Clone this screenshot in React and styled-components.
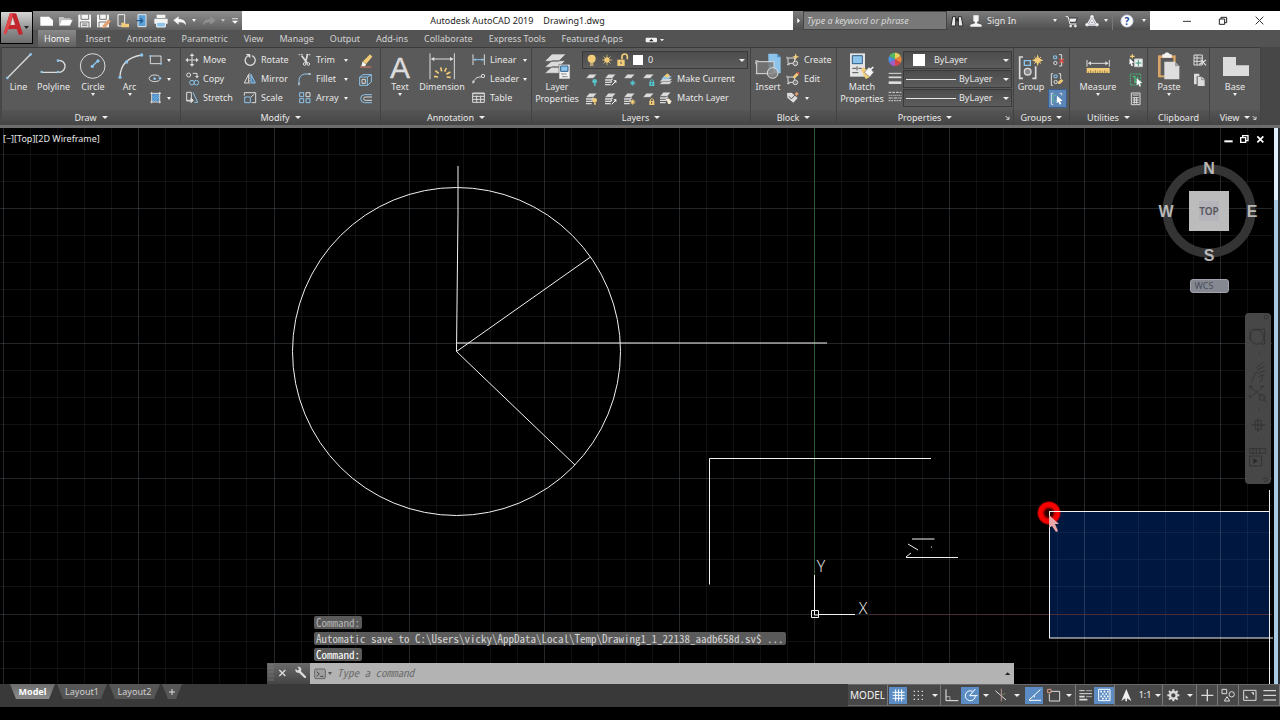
import React from 'react';
import styled, { createGlobalStyle, css } from 'styled-components';

const GlobalStyle = createGlobalStyle`
  body {
    margin: 0;
    background: #000000;
  }

  button, input, select {
    font: inherit;
    color: inherit;
    margin: 0;
    padding: 0;
    border: 0;
    background: none;
    outline: none;
  }
`;

const LIGHT = '#dcdcdc';
const BLUE = '#8cc4ec';
const YELLOW = '#f2cc78';
const TEAL = '#56c4cc';

const Page = styled.div`
  display: flex;
  flex-direction: column;
  min-height: 100vh;
  box-sizing: border-box;
  padding: 11px 0 13px 0;
  background: #000000;
  color: #e8e8e8;
  font-family: 'Noto Sans', 'Open Sans', sans-serif;
  font-size: 9px;
  line-height: 12px;
`;

/* ---------- title bar ---------- */

const Header = styled.header`
  display: grid;
  grid-template-columns: 33px 1fr;
  background: #535353;
`;

const AppButton = styled.button`
  display: flex;
  align-items: center;
  height: 33px;
  box-sizing: border-box;
  border: 1px solid #000000;
  background: linear-gradient(#d6d6d6, #8c8c8c 60%, #6e6e6e);
`;

const HeaderMain = styled.div`
  display: flex;
  flex-direction: column;
  min-width: 0;
`;

const TitleBar = styled.div`
  display: flex;
  height: 19px;
  background: #ffffff;
`;

const QuickAccess = styled.div`
  display: flex;
  align-items: center;
  padding: 0 1px 0 4px;
  background: linear-gradient(#8e8e8e, #606060);
`;

const TitleText = styled.div`
  flex: 1;
  display: flex;
  align-items: center;
  justify-content: center;
  gap: 10px;
  color: #1c1c1c;
`;

const InfoCenter = styled.div`
  display: flex;
  align-items: center;
  background: linear-gradient(#7c7c7c, #4e4e4e);
`;

const SearchInput = styled.input`
  width: 144px;
  height: 19px;
  box-sizing: border-box;
  padding-left: 3px;
  border: 1px solid #444444;
  background: #787878;
  font-style: italic;

  &::placeholder {
    color: #d8d8d8;
    opacity: 1;
  }
`;

const SignIn = styled.button`
  width: 65px;
  padding-left: 2px;
  text-align: left;
`;

const BarButton = styled.button`
  display: flex;
  align-items: center;
  justify-content: center;
  width: ${(p) => p.$w || 19}px;
  height: 19px;
  ${(p) => p.$sep && css`border-left: 1px solid #777777;`}
`;

const WindowButtons = styled.div`
  display: flex;
  padding: 0 3px 0 19px;
`;

const TabRow = styled.nav`
  display: flex;
  height: 17px;
  padding-left: 3px;
`;

const Tab = styled.button`
  margin: 0 2px;
  padding: 0 6px;
  color: #d2d2d2;
  ${(p) => p.$active && css`
    color: #f4f4f4;
    background: linear-gradient(#8a8a8a, #606060);
  `}
`;

/* ---------- ribbon ---------- */

const RibbonBar = styled.div`
  display: flex;
  padding-left: 2px;
  border-bottom: 3px solid #6c6c6c;
  background: #474747;
`;

const PanelBox = styled.section`
  display: flex;
  flex-direction: column;
  border-right: 1px solid #424242;
`;

const PanelBody = styled.div`
  display: flex;
  height: 63px;
  box-sizing: border-box;
  padding: 3px 0 0 ${(p) => p.$pad || 0}px;
  border-top: 1px solid #3a3a3a;
  background: #5a5a5a;
`;

const PanelFoot = styled.div`
  display: grid;
  grid-template-columns: 1fr auto 1fr;
  align-items: center;
  height: 15px;
  background: linear-gradient(#555555, #454545);
`;

const FootButton = styled.button`
  display: flex;
  align-items: center;
  gap: 5px;
`;

const Launcher = styled.button`
  display: flex;
  justify-self: end;
  padding-right: 3px;
`;

const LargeButton = styled.button`
  display: flex;
  flex-direction: column;
  align-items: center;
  width: ${(p) => p.$w}px;
  white-space: nowrap;
`;

const LargeIcon = styled.span`
  display: flex;
  align-items: center;
  justify-content: center;
  height: 30px;
`;

const Column = styled.div`
  display: flex;
  flex-direction: column;
  width: ${(p) => p.$w}px;
  margin-left: ${(p) => p.$gap || 0}px;
`;

const Row = styled.div`
  display: flex;
  align-items: center;
  height: 19px;
`;

const SmallButton = styled.button`
  display: flex;
  align-items: center;
  gap: 3px;
  height: 19px;
  box-sizing: border-box;
  padding-bottom: 2px;
  white-space: nowrap;
`;

const DropButton = styled.button`
  display: flex;
  align-items: center;
  justify-content: center;
  width: 12px;
  height: 19px;
  margin-left: ${(p) => (p.$auto ? 'auto' : '0')};
`;

const IconButton = styled.button`
  display: flex;
  align-items: center;
  justify-content: center;
  width: ${(p) => p.$w || 19}px;
  height: 19px;
  ${(p) => p.$active && css`
    background: #5c86b8;
    box-shadow: inset 0 0 0 1px #39608f;
  `}
`;

const Combo = styled.label`
  display: flex;
  align-items: center;
  gap: 3px;
  height: 18px;
  width: ${(p) => p.$w}px;
  box-sizing: border-box;
  margin-bottom: 1px;
  padding: 0 2px 0 ${(p) => p.$pad || 3}px;
  border: 1px solid #3a3a3a;
  background: linear-gradient(#4c4c4c, #5c5c5c);

  select {
    flex: 1;
    min-width: 0;
    appearance: none;
  }
`;

const Swatch = styled.span`
  width: ${(p) => p.$size}px;
  height: ${(p) => p.$size}px;
  margin-right: ${(p) => p.$gap}px;
  background: #ffffff;
`;

const LineSample = styled.span`
  width: 50px;
  height: 1px;
  background: #e6e6e6;
`;

/* ---------- drawing area ---------- */

const Workspace = styled.main`
  display: flex;
  flex: 1;
`;

const Canvas = styled.div`
  position: relative;
  flex: 1;
  min-height: 400px;
  overflow: hidden;
  background: #000000;
`;

const Drawing = styled.svg`
  position: absolute;
  inset: 0;
  width: 100%;
  height: 100%;
`;

const EdgeStrip = styled.div`
  width: 4px;
  border-right: 2px solid #2b3036;
  background: linear-gradient(#e2f0fa 72px, #a9cbe4 72px);
`;

const ViewLabel = styled.div`
  position: absolute;
  top: 5px;
  left: 3px;
`;

const ViewControls = styled.div`
  position: absolute;
  top: 4px;
  right: 6px;
  display: flex;

  button {
    display: flex;
    justify-content: center;
    width: 16px;
  }
`;

const ViewCube = styled.div`
  position: absolute;
  top: 29px;
  right: 13px;
  display: flex;
  flex-direction: column;
  align-items: center;
  gap: 14px;
`;

const WcsButton = styled.button`
  width: 39px;
  height: 14px;
  padding-left: 4px;
  border-radius: 3px;
  border: 1px solid #a0a3ac;
  background: #858891;
  color: #4a4d57;
  line-height: 10px;
  text-align: left;
`;

const NavBar = styled.div`
  position: absolute;
  top: 185px;
  right: 3px;
  display: flex;
  padding: 1px 0;
  border-radius: 4px;
  background: #474747;
`;

const CommandArea = styled.div`
  position: absolute;
  left: 267px;
  right: 260px;
  bottom: 0;
`;

const History = styled.div`
  display: flex;
  flex-direction: column;
  align-items: flex-start;
  gap: 3px;
  padding: 0 0 2px 47px;
  font-family: 'Noto Sans Mono CJK JP', 'Liberation Mono', monospace;
  font-size: 11px;
  line-height: 12px;
`;

const HistoryLine = styled.div`
  padding: 0 2px 1px 2px;
  border-radius: 2px;
  background: #5a5a5a;
  color: ${(p) => p.$color};
`;

const CommandBar = styled.div`
  display: flex;
  height: 21px;
  background: linear-gradient(#6a6a6a, #444444);
`;

const CommandField = styled.label`
  display: flex;
  flex: 1;
  align-items: center;
  gap: 2px;
  padding: 0 2px 0 4px;
  background: #b3b3b3;

  input {
    flex: 1;
    margin-left: 3px;
    padding-bottom: 3px;
    font: italic 11px 'Noto Sans Mono CJK JP', 'Liberation Mono', monospace;
    color: #333333;
  }

  input::placeholder {
    color: #6c6c6c;
    opacity: 1;
  }
`;

/* ---------- status bar ---------- */

const StatusBar = styled.footer`
  display: flex;
  justify-content: space-between;
  align-items: flex-start;
  height: 23px;
  background: #393939;
`;

const LayoutTabs = styled.div`
  display: flex;
  gap: 2px;
  padding-left: 10px;
`;

const LayoutTab = styled.button`
  display: flex;
  align-items: center;
  justify-content: center;
  width: ${(p) => p.$w}px;
  height: 15px;
  clip-path: polygon(0 0, 100% 0, calc(100% - 6px) 100%, 6px 100%);
  background: #565656;
  color: #d0d0d0;
  ${(p) => p.$active && css`
    background: linear-gradient(#6c6c6c, #8c8c8c);
    color: #ffffff;
    font-weight: bold;
  `}
`;

const StatusTools = styled.div`
  display: flex;
  height: 22px;
  box-sizing: border-box;
  border-top: 1px solid #6a6a6a;
  border-bottom: 1px solid #6a6a6a;
  background: #484848;
`;

const StatusGroup = styled.div`
  display: flex;
  align-items: center;
  padding-left: ${(p) => p.$pad || 0}px;
  border-right: 1px solid #7a7a7a;
`;

const StatusButton = styled.button`
  display: flex;
  align-items: center;
  justify-content: center;
  width: ${(p) => p.$w}px;
  height: 17px;
  font-size: ${(p) => (p.$big ? 10 : 9)}px;
  color: #f4f4f4;
  ${(p) => p.$active && css`background: #5b8dc4;`}
`;

/* ---------- icons, drawn on a grid three times their size ---------- */

const IconSvg = styled.svg`
  flex: none;
  overflow: visible;
`;

const Icon = ({ v, children }) => {
  const [, , w, h] = v.split(' ').map(Number);
  return (
    <IconSvg width={w / 3} height={h / 3} viewBox={v} fill="none" stroke={LIGHT} strokeWidth="3" aria-hidden="true">
      {children}
    </IconSvg>
  );
};

const Caret = ({ color = '#f0f0f0', size = 5 }) => (
  <svg width={size} height="3" viewBox="0 0 6 4" preserveAspectRatio="none" aria-hidden="true">
    <path d="M0 0h6L3 4z" fill={color} />
  </svg>
);

const Dots = ({ at, r = 4 }) => at.map(([x, y]) => (
  <circle key={`${x}-${y}`} cx={x} cy={y} r={r} fill={BLUE} stroke="none" />
));

const icons = {
  line: <Icon v="13 153 84 84"><path d="M20 231L90 160" strokeWidth="4" /><Dots at={[[20, 231], [90, 160]]} /></Icon>,
  polyline: <Icon v="119 153 84 84"><path d="M124 214h52a18 18 0 0 0 0-36" strokeWidth="4" /><Dots at={[[124, 213], [173, 213], [173, 179]]} /></Icon>,
  circle: <Icon v="237 153 84 84"><circle cx="278" cy="195" r="37" /><path d="M277 196l16-16" stroke={BLUE} strokeWidth="4" /><Dots r={5} at={[[277, 196], [294, 180]]} /></Icon>,
  arc: <Icon v="346 153 84 84"><path d="M358 229Q359 172 424 162" strokeWidth="4" /><Dots r={5} at={[[358, 229], [378, 183], [423, 162]]} /></Icon>,
  rect: <Icon v="443 156 48 48"><path d="M453 168h32v23h-32z" /><Dots at={[[453, 168], [485, 191]]} r={3} /></Icon>,
  ellipse: <Icon v="443 214 48 48"><path d="M480 230a17 10 0 1 0 1 11" /><Dots at={[[466, 237], [482, 236]]} r={4} /></Icon>,
  hatch: <Icon v="443 272 48 48"><path d="M458 283h22v24h-22z" fill="#4f8fca" stroke="none" /><path d="M453 282h32M453 308h32M457 278v34M481 278v34" /><path d="M461 304l18-18M461 296l10-10M468 304l11-11" stroke={BLUE} strokeWidth="2" /></Icon>,

  move: <Icon v="553 156 48 48"><path d="M577 164v32M561 180h32" /><path d="M577 160l7 8h-14zM577 200l7-8h-14zM557 180l8-7v14zM597 180l-8-7v14z" fill={LIGHT} stroke="none" /></Icon>,
  copy: <Icon v="553 214 48 48"><circle cx="567" cy="226" r="6" /><path d="M579 221h13v10" /><path d="M592 236l-6-7h12z" fill={LIGHT} stroke="none" /><circle cx="577" cy="249" r="7" stroke={BLUE} /><circle cx="590" cy="249" r="7" stroke={BLUE} /></Icon>,
  stretch: <Icon v="553 272 48 48"><path d="M561 279h14v26h-14z" /><path d="M574 296l7 7-7 7zM562 303h14" fill={LIGHT} /><path d="M580 279l14 30h-10" stroke={BLUE} /></Icon>,
  rotate: <Icon v="727 156 48 48"><path d="M757 167a15 15 0 1 1-13 1" strokeWidth="4" /><path d="M738 162h14v13z" fill={LIGHT} stroke="none" /></Icon>,
  mirror: <Icon v="727 214 48 48"><path d="M747 224v26h-13z" /><path d="M754 224v26h13z" stroke={BLUE} fill="#4c7da8" /><path d="M750 220v36" strokeDasharray="4 3" strokeWidth="2" /></Icon>,
  scale: <Icon v="727 272 48 48"><path d="M734 289v-9h34v30h-12" /><path d="M735 293h17v17h-17z" stroke={BLUE} /><path d="M754 293l10-9" /></Icon>,
  trim: <Icon v="893 156 48 48"><path d="M898 164h14M921 164h14" strokeDasharray="5 2" /><path d="M907 167l17 23M925 162l-7 26" strokeWidth="5" /><circle cx="916" cy="192" r="4" /><circle cx="927" cy="192" r="4" /></Icon>,
  fillet: <Icon v="893 214 48 48"><path d="M899 255v-12a19 19 0 0 1 19-20h16" stroke={BLUE} /><path d="M899 257v-8M926 223h9" /></Icon>,
  array: <Icon v="893 272 48 48"><path d="M901 280h12v12h-12zM901 298h12v12h-12zM920 298h12v12h-12z" stroke={BLUE} /><path d="M920 280h12v12h-12z" /></Icon>,
  erase: <Icon v="1074 156 48 48"><path d="M1110 160l7 7-18 21-12-5z" fill={YELLOW} stroke="none" /><path d="M1087 183l12 6-4 7h-11z" fill="#f4f4f4" stroke="none" /><path d="M1080 198h34" stroke="#d87a62" /></Icon>,
  explode: <Icon v="1074 214 48 48"><path d="M1088 222h26v22M1079 229h23v25h-23zM1080 229l8-7M1102 229l12-7M1102 254l12-10" stroke={BLUE} /><path d="M1086 236h10v12h-10z" /></Icon>,
  offset: <Icon v="1074 272 48 48"><path d="M1116 283h-22a12 12 0 0 0 0 24h22" stroke={BLUE} /><path d="M1116 290h-20a5 5 0 0 0 0 10h20" /></Icon>,

  text: <Icon v="18 153 84 84"><text x="60" y="230" textAnchor="middle" fontFamily="Liberation Sans, sans-serif" fontSize="90" fill={LIGHT} stroke={LIGHT} strokeWidth="1">A</text></Icon>,
  dimension: (
    <Icon v="143 153 84 84">
      <path d="M149 157v78M222 157v78M156 174h60" />
      <path d="M151 174l11-6v12zM220 174l-11-6v12z" fill={LIGHT} stroke="none" />
      <path d="M161 226l12 2M165 209l10 8M181 199l3 12M198 201l-5 11M210 213l-12 7M199 228l12 1" stroke={YELLOW} strokeWidth="5" />
    </Icon>
  ),
  linear: <Icon v="270 156 48 48"><path d="M276 163v32M310 163v32" /><path d="M278 179h30" stroke={BLUE} /><path d="M277 179l7-4v8zM309 179l-7-4v8z" fill={BLUE} stroke="none" /></Icon>,
  leader: <Icon v="270 214 48 48"><path d="M277 249c2-10 10-18 24-17" /><path d="M274 252l1-10 7 5z" fill={LIGHT} stroke="none" /><circle cx="306" cy="229" r="5" /></Icon>,
  table: <Icon v="270 272 48 48"><path d="M275 281h35v28h-35zM275 283h35M275 291h35M275 300h35M287 289v20M299 289v20" /></Icon>,

  layerProps: (
    <Icon v="489 153 84 84">
      <path d="M494 217l22-20h40l-20 20zM494 199l22-20h40l-20 20zM494 181l22-22h42l-22 22z" fill={LIGHT} stroke="#5a5a5a" strokeWidth="2" />
      <path d="M537 190h33v44h-33z" fill="#f2f2f2" stroke="#666666" strokeWidth="2" />
      <path d="M542 195h22v16h-22z" fill={BLUE} stroke="#2f5f88" />
      <path d="M543 219h17M546 227h17" stroke="#555555" strokeWidth="2" />
    </Icon>
  ),

  insert: (
    <Icon v="39 153 84 84">
      <path d="M82 158h26l11 11v48H82z" fill={BLUE} stroke="none" />
      <path d="M108 158v11h11z" fill="#4a91cc" stroke="none" />
      <path d="M47 182h52v36H47z" fill="#777777" fillOpacity="0.8" />
      <circle cx="95" cy="216" r="16" fill="#888888" fillOpacity="0.8" />
      <path d="M44 190v-11h8M44 218h6" strokeWidth="2" />
    </Icon>
  ),
  createBlock: <Icon v="135 156 48 48"><path d="M144 174h20v16h-20zM141 194h8M141 170v6" /><circle cx="166" cy="190" r="7" fill="#777777" /><path d="M167 160l3 8 8 2-8 3-3 8-3-8-7-3 7-2z" fill={YELLOW} stroke="none" /></Icon>,
  editBlock: <Icon v="135 214 48 48"><path d="M144 232h20v16h-20zM141 252h8M141 228v6" /><circle cx="166" cy="248" r="7" fill="#777777" /><path d="M158 236l3-8 9-9 6 6-10 10z" fill={YELLOW} stroke="none" /><path d="M170 219l4-3 5 5-3 4z" fill="#e05a48" stroke="none" /></Icon>,
  attribute: <Icon v="135 272 48 48"><path d="M141 281l14-1 18 16-13 14-18-15z" fill={LIGHT} stroke="none" /><path d="M147 291l7 8 15-16" stroke="#555555" /><path d="M164 284l6-6 6 5-7 7z" fill="#e8a070" stroke="none" /></Icon>,

  matchProps: (
    <Icon v="325 153 84 84">
      <path d="M331 157h45v70h-45z" fill="#e4e4e4" stroke="none" />
      <path d="M338 164h30v24h-30z" fill={BLUE} stroke="#2f5f88" />
      <path d="M338 202h12M356 202h10M338 215h18M352 196v12" stroke="#555555" />
      <path d="M364 206l8-8 22 24-7 8-9 4z" fill={YELLOW} stroke="none" />
      <path d="M374 214l14-16 14 16-12 14z" fill="#f4f4f4" stroke="#777777" strokeWidth="2" />
      <path d="M392 206l9-8" stroke="#f4f4f4" strokeWidth="5" />
    </Icon>
  ),
  wheel: (
    <Icon v="439 156 48 48">
      <g stroke="none">
        <path d="M463 178V158a20 20 0 0 1 17 10z" fill="#e8d05a" />
        <path d="M463 178l17-10a20 20 0 0 1 0 20z" fill="#e8853c" />
        <path d="M463 178l17 10a20 20 0 0 1-17 10z" fill="#d84848" />
        <path d="M463 178v20a20 20 0 0 1-17-10z" fill="#a45cc8" />
        <path d="M463 178l-17 10a20 20 0 0 1 0-20z" fill="#4f8fe0" />
        <path d="M463 178l-17-10a20 20 0 0 1 17-10z" fill="#56b860" />
      </g>
    </Icon>
  ),
  weights: <Icon v="439 214 48 48"><path d="M444 221h38" /><path d="M444 233h38" strokeWidth="5" /><path d="M444 249h38" strokeWidth="8" /></Icon>,
  linetypes: <Icon v="439 272 48 48"><path d="M444 279h38" strokeDasharray="8 3" /><path d="M444 288h38" strokeDasharray="3 3" /><path d="M444 296h38" strokeDasharray="9 2 3 2" /><path d="M444 304h38" strokeDasharray="5 3" /></Icon>,

  group: (
    <Icon v="18 153 84 84">
      <path d="M36 168H26v64h10M64 232h10v-36" strokeWidth="5" />
      <path d="M40 179h18v14H40z" stroke={BLUE} strokeWidth="4" />
      <circle cx="50" cy="212" r="10" fill="#8a8a8a" strokeWidth="4" />
      <path d="M80 160l4 12 13 6-13 6-4 12-4-12-13-6 13-6z" fill={YELLOW} stroke="none" />
      <path d="M70 168l20 20M90 168l-20 20" stroke={YELLOW} />
    </Icon>
  ),
  ungroup: <Icon v="121 156 48 48"><path d="M132 165h9v8h-9z" stroke={BLUE} /><circle cx="137" cy="186" r="5" /><path d="M148 161h8v34h-8" /><path d="M149 173l13 13M162 173l-13 13" stroke="#e05048" strokeWidth="4" /></Icon>,
  groupEdit: <Icon v="121 214 48 48"><path d="M130 219h-5v35h5M147 219h6v16" /><path d="M133 223h9v8h-9z" stroke={BLUE} /><circle cx="138" cy="244" r="5" /><path d="M144 250l3-8 8-7 6 5-9 9z" fill={YELLOW} stroke="none" /></Icon>,
  groupSelect: <Icon v="121 272 48 48"><path d="M131 279h-6v33h6M150 279h6v6" /><path d="M130 285h10M130 285v18h8" stroke="#57c98d" strokeDasharray="4 2" /><path d="M142 286l17 15-8 1 4 8-5 3-4-9-5 5z" fill="#ffffff" stroke="none" /></Icon>,

  measure: (
    <Icon v="223 153 84 84">
      <path d="M232 177v20M299 177v20M238 187h56" />
      <path d="M234 187l10-6v12zM297 187l-10-6v12z" fill={LIGHT} stroke="none" />
      <path d="M231 201h69v15h-69z" fill={YELLOW} stroke="none" />
      <path d="M236 216v-5M243 216v-8M250 216v-5M257 216v-8M264 216v-5M271 216v-8M278 216v-5M285 216v-8M292 216v-5" stroke="#6a5a30" strokeWidth="2" />
    </Icon>
  ),
  quickSelect: <Icon v="352 156 48 48"><path d="M365 160v12M358 166h14" stroke={YELLOW} strokeWidth="4" /><path d="M357 172l13 13-6 1 3 8-4 2-4-9-3 4z" fill="#ffffff" stroke="none" /><path d="M372 174h23v23h-23z" fill="#e8f4f0" stroke="#cccccc" /><path d="M375 186h17M383 177v18" stroke="#46907c" /></Icon>,
  selectAll: <Icon v="352 214 48 48"><path d="M359 220h31v33h-31z" stroke="#46c07a" strokeDasharray="5 3" /><path d="M366 228h7v17h8v-17" stroke="#46c07a" strokeWidth="4" /><path d="M378 233l17 14-8 1 4 8-4 2-4-8-5 4z" fill="#ffffff" stroke="none" /></Icon>,
  calculator: <Icon v="352 272 48 48"><path d="M362 278h26v35h-26zM366 284h18M366 292h18M366 299h18M366 306h18M371 291v19M378 291v19" /></Icon>,

  paste: (
    <Icon v="436 153 84 84">
      <path d="M445 163h53v66h-53z" fill="#d9a567" stroke="none" />
      <path d="M453 171h38v52h-38z" fill="#5a5a5a" stroke="none" />
      <path d="M458 160h6c2-7 14-7 16 0h6v10h-28z" fill="#f2f2f2" stroke="none" />
      <path d="M464 182h32l13 14v39h-45z" fill="#dedede" stroke="none" />
      <path d="M496 182v14h13z" fill="#9c9c9c" stroke="none" />
    </Icon>
  ),
  cut: <Icon v="544 156 48 48"><path d="M550 162h25v30h-25zM550 171h25M550 181h25M559 162v30" /><path d="M566 190l20-13M570 176l16 17" strokeWidth="4" /></Icon>,
  copyClip: <Icon v="544 214 48 48"><path d="M550 219h16v8h-8v24h-8z" fill={LIGHT} stroke="none" /><path d="M561 228h13l8 8v20h-21z" fill={LIGHT} stroke="none" /><path d="M573 228v9h9" stroke="#666666" strokeWidth="2" /></Icon>,
  base: <Icon v="633 153 84 84"><path d="M639 168h39v25h39v32h-78z" fill={LIGHT} stroke="none" /></Icon>,
};

const accents = {
  bulb: (c) => <><circle cx="32" cy="28" r="7" fill={c} stroke="none" /><path d="M30 35h5v6h-5z" fill={c} stroke="none" /></>,
  arrow: () => <><path d="M26 40l12-12" stroke="#ffffff" /><path d="M40 25v9l-9-9z" fill="#ffffff" stroke="none" /></>,
  sun: (c) => <><circle cx="32" cy="33" r="5" fill={c} stroke="none" /><path d="M32 24v18M23 33h18M26 27l12 12M38 27l-12 12" stroke={c} strokeWidth="2" /></>,
  lock: (c) => <><path d="M25 30h15v12H25z" fill={c} stroke="none" /><path d="M28 31v-5a5 5 0 0 1 9 0v5" stroke={c} /><path d="M32 33v5" stroke="#444444" /></>,
  hand: (c) => <path d="M24 28l7-3 10 9-5 8h-5z" fill={c} stroke="none" />,
};

const LayerIcon = ({ accent, color, full }) => (
  <Icon v="0 0 48 48">
    <path d="M6 19L16 7h22L28 19z" fill={LIGHT} stroke="#5a5a5a" strokeWidth="1" />
    {full && <path d="M6 24h18l5-4M6 31h17l4-4M6 38h17" strokeWidth="4" />}
    {accents[accent](color)}
  </Icon>
);

const MakeCurrentIcon = () => (
  <Icon v="0 0 48 48">
    <path d="M4 40l10-9h29l-9 9zM4 32l10-9h29l-9 9z" fill={LIGHT} stroke="#5a5a5a" strokeWidth="1" />
    <path d="M10 24l8-9h23l-8 9z" fill={BLUE} stroke="none" />
    <path d="M18 16l10-9 8 7-7 6z" fill={YELLOW} stroke="none" />
  </Icon>
);

/* ---------- ribbon parts ---------- */

const Panel = ({ title, pad, menu = true, launcher, children }) => (
  <PanelBox aria-label={title}>
    <PanelBody $pad={pad}>{children}</PanelBody>
    <PanelFoot>
      <span />
      <FootButton>{title}{menu && <Caret size={6} />}</FootButton>
      {launcher ? (
        <Launcher aria-label={`${title} settings`}>
          <Icon v="0 0 15 15"><path d="M2 3l9 9M12 5v8H4" /></Icon>
        </Launcher>
      ) : <span />}
    </PanelFoot>
  </PanelBox>
);

const Large = ({ icon, label, second, w, drop }) => (
  <LargeButton $w={w}>
    <LargeIcon>{icons[icon]}</LargeIcon>
    <span>{label}</span>
    {second && <span>{second}</span>}
    {drop && <Caret size={4} />}
  </LargeButton>
);

const Small = ({ icon, label, drop }) => (
  <Row>
    <SmallButton aria-label={label || icon}>{icons[icon]}{label}</SmallButton>
    {drop && <DropButton $auto={Boolean(label)} aria-label={`${label || icon} options`}><Caret size={4} /></DropButton>}
  </Row>
);

const ByLayer = ({ label, swatch }) => (
  <Combo $w={109} $pad={swatch ? 9 : 2}>
    {swatch ? <Swatch $size={12} $gap={6} /> : <LineSample />}
    <select aria-label={label} defaultValue="ByLayer"><option>ByLayer</option></select>
    <Caret size={6} />
  </Combo>
);

const Ribbon = () => (
  <RibbonBar>
    <Panel title="Draw">
      <Large icon="line" label="Line" w={33} />
      <Large icon="polyline" label="Polyline" w={37} />
      <Large icon="circle" label="Circle" w={42} drop />
      <Large icon="arc" label="Arc" w={31} drop />
      <Column $w={33} $gap={2}>
        <Small icon="rect" drop />
        <Small icon="ellipse" drop />
        <Small icon="hatch" drop />
      </Column>
    </Panel>
    <Panel title="Modify" pad={3}>
      <Column $w={58}>
        <Small icon="move" label="Move" />
        <Small icon="copy" label="Copy" />
        <Small icon="stretch" label="Stretch" />
      </Column>
      <Column $w={55}>
        <Small icon="rotate" label="Rotate" />
        <Small icon="mirror" label="Mirror" />
        <Small icon="scale" label="Scale" />
      </Column>
      <Column $w={55}>
        <Small icon="trim" label="Trim" drop />
        <Small icon="fillet" label="Fillet" drop />
        <Small icon="array" label="Array" drop />
      </Column>
      <Column $w={28}>
        <IconButton $w={28} aria-label="Erase">{icons.erase}</IconButton>
        <IconButton $w={28} aria-label="Explode">{icons.explode}</IconButton>
        <IconButton $w={28} aria-label="Offset">{icons.offset}</IconButton>
      </Column>
    </Panel>
    <Panel title="Annotation">
      <Large icon="text" label="Text" w={38} drop />
      <Large icon="dimension" label="Dimension" w={46} />
      <Column $w={60} $gap={6}>
        <Small icon="linear" label="Linear" drop />
        <Small icon="leader" label="Leader" drop />
        <Small icon="table" label="Table" />
      </Column>
    </Panel>
    <Panel title="Layers">
      <Large icon="layerProps" label="Layer" second="Properties" w={50} />
      <Column $w={168}>
        <Combo $w={166}>
          <Icon v="0 0 39 48"><circle cx="17" cy="20" r="12" fill={YELLOW} stroke="none" /><path d="M12 31h10v10H12z" fill={YELLOW} stroke="none" /><path d="M12 36h10" stroke="#777777" /></Icon>
          <Icon v="0 0 36 48"><circle cx="15" cy="24" r="8" fill={YELLOW} stroke="none" /><path d="M15 8v32M0 24h31M4 13l22 22M26 13L4 35" stroke={YELLOW} strokeWidth="2" /></Icon>
          <Icon v="0 0 39 48"><path d="M1 23h22v19H1z" fill={YELLOW} stroke="none" /><path d="M15 22v-8a8 8 0 0 1 16 0v8" stroke={YELLOW} strokeWidth="5" /><path d="M12 29v7" stroke="#555555" /></Icon>
          <Swatch $size={10} $gap={2} />
          <select aria-label="Layer" defaultValue="0"><option>0</option></select>
          <Caret size={6} />
        </Combo>
        <Row>
          <IconButton aria-label="Off"><LayerIcon accent="bulb" color={TEAL} /></IconButton>
          <IconButton aria-label="Isolate"><LayerIcon accent="arrow" full /></IconButton>
          <IconButton aria-label="Freeze"><LayerIcon accent="sun" color={TEAL} /></IconButton>
          <IconButton aria-label="Lock"><LayerIcon accent="lock" color={TEAL} /></IconButton>
          <SmallButton><MakeCurrentIcon />Make Current</SmallButton>
        </Row>
        <Row>
          <IconButton aria-label="Turn all layers on"><LayerIcon accent="bulb" color={YELLOW} full /></IconButton>
          <IconButton aria-label="Unisolate"><LayerIcon accent="arrow" full /></IconButton>
          <IconButton aria-label="Thaw all layers"><LayerIcon accent="sun" color={YELLOW} full /></IconButton>
          <IconButton aria-label="Unlock"><LayerIcon accent="lock" color={YELLOW} /></IconButton>
          <SmallButton><LayerIcon accent="hand" color="#f4ead0" full />Match Layer</SmallButton>
        </Row>
      </Column>
    </Panel>
    <Panel title="Block">
      <Large icon="insert" label="Insert" w={34} />
      <Column $w={51}>
        <Small icon="createBlock" label="Create" />
        <Small icon="editBlock" label="Edit" />
        <Small icon="attribute" drop />
      </Column>
    </Panel>
    <Panel title="Properties" launcher>
      <Large icon="matchProps" label="Match" second="Properties" w={50} />
      <Column $w={16}>
        <Small icon="wheel" />
        <Small icon="weights" />
        <Small icon="linetypes" />
      </Column>
      <Column $w={110}>
        <ByLayer label="Object color" swatch />
        <ByLayer label="Lineweight" />
        <ByLayer label="Linetype" />
      </Column>
    </Panel>
    <Panel title="Groups">
      <Large icon="group" label="Group" w={34} />
      <Column $w={21}>
        <IconButton aria-label="Ungroup">{icons.ungroup}</IconButton>
        <IconButton aria-label="Group edit">{icons.groupEdit}</IconButton>
        <IconButton aria-label="Group selection" $active>{icons.groupSelect}</IconButton>
      </Column>
    </Panel>
    <Panel title="Utilities">
      <Large icon="measure" label="Measure" w={56} drop />
      <Column $w={21}>
        <IconButton aria-label="Quick select">{icons.quickSelect}</IconButton>
        <IconButton aria-label="Select all">{icons.selectAll}</IconButton>
        <IconButton aria-label="Quick calculator">{icons.calculator}</IconButton>
      </Column>
    </Panel>
    <Panel title="Clipboard" menu={false}>
      <Large icon="paste" label="Paste" w={42} drop />
      <Column $w={19}>
        <IconButton aria-label="Cut">{icons.cut}</IconButton>
        <IconButton aria-label="Copy clip">{icons.copyClip}</IconButton>
      </Column>
    </Panel>
    <Panel title="View" launcher>
      <Large icon="base" label="Base" w={50} drop />
    </Panel>
  </RibbonBar>
);

/* ---------- title bar parts ---------- */

const tabs = ['Home', 'Insert', 'Annotate', 'Parametric', 'View', 'Manage', 'Output', 'Add-ins', 'Collaborate', 'Express Tools', 'Featured Apps'];

const quickIcons = [
  ['New', <path d="M7 14h26l12 11v16H7z" fill="#ffffff" stroke="none" />],
  ['Open', <><path d="M6 40V15h13l4 4h18v6" fill="#c8c8c8" stroke="none" /><path d="M6 41l8-18h33l-8 18z" fill="#ffffff" stroke="#888888" strokeWidth="1" /></>],
  ['Save', <><path d="M7 8h38v38H7z" fill="#f4f4f4" stroke="none" /><path d="M15 8v14h23V8M13 46V30h26v16M18 36h16M18 41h16" stroke="#777777" /></>],
  ['Save as', <><path d="M6 8h36v38H6z" fill="#f4f4f4" stroke="none" /><path d="M14 8v14h20V8M12 46V30h22" stroke="#777777" /><path d="M24 40l16-18 8 6-16 18-10 3z" fill="#e0a070" stroke="none" /></>],
  ['Open from mobile', <><path d="M12 8h20v34H12z" fill="#777777" stroke="#f0f0f0" /><path d="M22 32h8l3 3h12v11H22z" fill={YELLOW} stroke="none" /></>],
  ['Save to mobile', <><path d="M15 8h24v36H15z" fill="#5aa0d8" stroke="#e8e8e8" /><path d="M10 26h16M22 19l7 7-7 7" stroke="#245c90" strokeWidth="4" /></>],
  ['Plot', <><path d="M14 8h26v10H14zM7 20h40v15H7z" fill="#f4f4f4" stroke="none" /><path d="M14 31h26v14H14z" fill={BLUE} stroke="#f4f4f4" /></>],
];

const TitleSection = () => (
  <Header>
    <AppButton aria-label="Application menu">
      <Icon v="3 36 69 93">
        <path d="M11 101L28 44q1-4 5-4h12q4 0 5 4l19 58-12 3-7-18-26 1-6 15zM30 75l16-1-8-24z" fill="#c3262c" fillRule="evenodd" stroke="none" />
        <path d="M28 44q1-4 5-4h6l-9 35-14 28-5-2z" fill="#e2484a" stroke="none" />
        <path d="M33 75l5-18 6 17z" fill="#f2dcdc" stroke="none" />
      </Icon>
      <Caret size={5} color="#222222" />
    </AppButton>
    <HeaderMain>
      <TitleBar>
        <QuickAccess>
          {quickIcons.map(([name, shape]) => (
            <BarButton key={name} aria-label={name}><Icon v="0 0 54 54">{shape}</Icon></BarButton>
          ))}
          <BarButton aria-label="Undo"><Icon v="0 0 48 54"><path d="M4 25l16-12v8c14 0 22 6 22 19-5-8-10-10-22-9v7z" fill="#f4f4f4" stroke="none" /></Icon></BarButton>
          <BarButton $w={10} aria-label="Undo list"><Caret size={4} /></BarButton>
          <BarButton aria-label="Redo"><Icon v="0 0 48 54"><path d="M44 25L28 13v8C14 21 6 27 6 40c5-8 10-10 22-9v7z" fill="#909090" stroke="none" /></Icon></BarButton>
          <BarButton $w={10} aria-label="Redo list"><Caret size={4} color="#c0c0c0" /></BarButton>
          <BarButton $w={13} aria-label="Customize quick access"><Icon v="0 0 24 24"><path d="M3 5h18" /><path d="M3 11h18l-9 9z" fill="#ffffff" stroke="none" /></Icon></BarButton>
        </QuickAccess>
        <TitleText><span>Autodesk AutoCAD 2019</span><span>Drawing1.dwg</span></TitleText>
        <InfoCenter>
          <BarButton $w={10} aria-label="Collapse search"><Icon v="0 0 15 24"><path d="M4 3l8 8-8 8z" fill="#ffffff" stroke="none" /></Icon></BarButton>
          <SearchInput aria-label="Search" placeholder="Type a keyword or phrase" />
          <BarButton $w={20} aria-label="Find">
            <Icon v="0 0 48 48"><path d="M6 39l5-28h9v28zM28 39V11h9l5 28z" fill="#e8e8e8" stroke="#2c2c2c" /><path d="M19 16h10v9H19z" fill="#2c2c2c" stroke="none" /></Icon>
          </BarButton>
          <BarButton $w={18} aria-label="Account">
            <Icon v="0 0 48 48"><path d="M16 7h16v16l-5 5v3l14 4v6H7v-6l14-4v-3l-5-5z" fill="#f4f4f4" stroke="none" /></Icon>
          </BarButton>
          <SignIn>Sign In</SignIn>
          <BarButton $w={10} aria-label="Account options"><Caret size={4} /></BarButton>
          <BarButton $w={24} aria-label="App store">
            <Icon v="0 0 48 48"><path d="M14 15h26l-5 13H18z" fill="#f0f0f0" stroke="#30343c" /><path d="M5 11h7l6 22h19" stroke="#f0f0f0" /><circle cx="20" cy="39" r="3" fill="#ffffff" /><circle cx="34" cy="39" r="3" fill="#ffffff" /></Icon>
          </BarButton>
          <BarButton $w={16} aria-label="Autodesk App Store">
            <Icon v="0 0 48 48"><path d="M24 10L9 36h30zM24 20l-6 11h12z" stroke="#ececf4" strokeWidth="4" /><circle cx="24" cy="11" r="4" fill="#ffffff" /><circle cx="9" cy="35" r="4" fill="#ffffff" /><circle cx="39" cy="35" r="4" fill="#ffffff" /></Icon>
          </BarButton>
          <BarButton $w={12} aria-label="Store options"><Caret size={4} /></BarButton>
          <BarButton $w={26} $sep aria-label="Help">
            <Icon v="0 0 42 42"><circle cx="24" cy="21" r="18" fill="#ffffff" stroke="#d0d8ec" /><text x="24" y="32" textAnchor="middle" fontSize="30" fontWeight="bold" fill="#24459a" stroke="none">?</text></Icon>
          </BarButton>
          <BarButton $w={12} aria-label="Help options"><Caret size={4} /></BarButton>
        </InfoCenter>
        <WindowButtons>
          <BarButton $w={36} aria-label="Minimize"><Icon v="0 0 24 24"><path d="M0 13h24" stroke="#333333" /></Icon></BarButton>
          <BarButton $w={36} aria-label="Restore"><Icon v="0 0 30 30"><path d="M4 9h16v16H4zM9 9V4h17v16h-6" stroke="#222222" /></Icon></BarButton>
          <BarButton $w={36} aria-label="Close"><Icon v="0 0 27 27"><path d="M2 2l23 23M25 2L2 25" stroke="#333333" /></Icon></BarButton>
        </WindowButtons>
      </TitleBar>
      <TabRow>
        {tabs.map((tab, i) => <Tab key={tab} $active={i === 0}>{tab}</Tab>)}
        <BarButton $w={48} aria-label="Minimize ribbon">
          <Icon v="0 0 60 24"><rect x="2" y="5" width="34" height="14" rx="3" fill="#f0f0f0" stroke="none" /><path d="M12 16l7-7 7 7z" fill="#222222" stroke="none" /><path d="M45 9h12l-6 7z" fill="#f0f0f0" stroke="none" /></Icon>
        </BarButton>
      </TabRow>
    </HeaderMain>
  </Header>
);

/* ---------- model space ---------- */

const STEP = 27.03;
const ORIGIN_X = 814.6;
const ORIGIN_Y = 614;
const TOP = 128;

const gridLines = (origin, from, to) => {
  const lines = [];
  for (let k = Math.ceil((from - origin) / STEP); origin + k * STEP < to; k += 1) {
    lines.push({ at: Math.floor(origin + k * STEP) + 0.5, major: k % 5 === 0 });
  }
  return lines;
};

const ModelSpace = () => (
  <Drawing fill="none" stroke="#f2f2f2">
    <defs>
      <radialGradient id="click">
        <stop offset="0" stopColor="#180000" />
        <stop offset="0.3" stopColor="#380000" />
        <stop offset="0.55" stopColor="#f00000" />
        <stop offset="0.85" stopColor="#ff0000" />
        <stop offset="1" stopColor="#c00000" stopOpacity="0.3" />
      </radialGradient>
    </defs>
    <g transform={`translate(0 ${-TOP})`}>
      <path d="M1049 512h221v126h-221z" fill="#00183f" stroke="none" />
      {gridLines(ORIGIN_X, 0, 1272).map(({ at, major }) => (
        <path key={`x${at}`} d={`M${at} ${TOP}V684`} stroke="#a0b0c0" strokeOpacity={major ? 0.22 : 0.09} />
      ))}
      {gridLines(ORIGIN_Y, TOP, 684).map(({ at, major }) => (
        <path key={`y${at}`} d={`M0 ${at}H1272`} stroke="#a0b0c0" strokeOpacity={major ? 0.22 : 0.09} />
      ))}
      <path d="M814.5 128V575" stroke="#2c5a2c" />
      <path d="M870 614.5H1272" stroke="#4a2c34" />
      <circle cx="456.5" cy="351.5" r="164" />
      <path d="M458 166V213L457 305L456.5 351.5L590.5 257M456.5 351.5L575 465M457 343H827" />
      <path d="M709.5 584.5V458.5H931" />
      <path d="M912 539H934.5M906 557.5H958M908 544l10 6M906 557l5-4M931 547h1" />
      <path d="M1049.5 638V511.5H1269M1049 638H1273M1269.5 490V684" />
      <path d="M814.5 575V610M819 614.5H855M811.5 610.5h7v7h-7zM814.5 611v4h4" />
      <g fontSize="16" fontFamily="Open Sans, sans-serif" fontWeight="300" fill="#f2f2f2" stroke="none" textAnchor="middle">
        <text x="821" y="572">Y</text>
        <text x="863" y="614">X</text>
      </g>
      <circle cx="1049" cy="513" r="12" fill="url(#click)" stroke="none" />
      <path d="M1049 511.5h12M1049.5 512v8" />
      <path d="M1049 515v13l3-2 4 6 2-1-3-7h4z" fill="#e8a8a8" stroke="none" />
    </g>
  </Drawing>
);

const ViewTools = () => (
  <>
    <ViewLabel>[−][Top][2D Wireframe]</ViewLabel>
    <ViewControls>
      <button aria-label="Minimize drawing"><Icon v="0 0 27 48"><path d="M1 28h25" strokeWidth="6" stroke="#ffffff" /></Icon></button>
      <button aria-label="Restore drawing"><Icon v="0 0 27 48"><path d="M2 17h15v14H2zM8 16v-5h16v15h-6" stroke="#ffffff" strokeWidth="4" /></Icon></button>
      <button aria-label="Close drawing"><Icon v="0 0 27 48"><path d="M4 13l18 18M22 13L4 31" stroke="#ffffff" strokeWidth="5" /></Icon></button>
    </ViewControls>
    <ViewCube>
      <svg width="104" height="108" viewBox="0 0 104 108" role="img" aria-label="View cube">
        <circle cx="52" cy="54" r="42" fill="none" stroke="#343434" strokeWidth="9" />
        <g fontFamily="Liberation Sans, sans-serif" fontWeight="bold" fontSize="16" fill="#b8b8b8" textAnchor="middle">
          <text x="52" y="17">N</text>
          <text x="52" y="104">S</text>
          <text x="9" y="60">W</text>
          <text x="95" y="60">E</text>
        </g>
        <path d="M32 34h40v40H32z" fill="#bcbcbc" />
        <path d="M42 44h20v20H42z" fill="#b4b4ba" />
        <text x="52" y="58" fontSize="10" fontWeight="600" fill="#55555a" textAnchor="middle">TOP</text>
      </svg>
      <WcsButton>WCS</WcsButton>
    </ViewCube>
    <NavBar>
      <Icon v="374 568 78 507">
        <g stroke="#2c2c2c" strokeWidth="2">
          <circle cx="437" cy="577" r="6" />
          <path d="M393 614h40v44h-12M389 616v30M395 622a20 22 0 1 0 32 26 20 22 0 0 0-32-26zM414 686h4M392 775c12-20 6-30 20-34M408 730l20-16M410 736l24-12M412 746l22-8M414 756l18-6M424 752c6 8 0 20-8 20M388 785l42 34M430 785l-42 34" />
          <path d="M388 785h10M388 785v9M430 785h-10M388 819v-9" />
          <circle cx="425" cy="818" r="9" />
          <path d="M431 825l8 9M413 853h4M413 880v42M392 901h44M405 888h18v26h-18zM413 945h4M388 972h48v14h-48zM398 972v14M408 972v14M418 972v14M388 994h36v30h-36z" />
          <path d="M400 1002l12 7-12 7z" fill="#2c2c2c" />
          <circle cx="436" cy="1065" r="6" />
        </g>
      </Icon>
    </NavBar>
  </>
);

const Command = () => (
  <CommandArea>
    <History>
      <HistoryLine $color="#b4b4b4">Command:</HistoryLine>
      <HistoryLine $color="#d4d4d4">{'Automatic save to C:\\Users\\vicky\\AppData\\Local\\Temp\\Drawing1_1_22138_aadb658d.sv$ ...'}</HistoryLine>
      <HistoryLine $color="#ffffff">Command:</HistoryLine>
    </History>
    <CommandBar>
      <BarButton $w={7} aria-label="Move command line"><Icon v="0 0 21 57"><path d="M6 4v50M12 4v50M18 4v50" strokeDasharray="2 2" stroke="#a0a0a0" strokeWidth="2" /></Icon></BarButton>
      <BarButton $w={17} aria-label="Close command line"><Icon v="0 0 27 27"><path d="M4 6l18 18M22 6L4 24" strokeWidth="4" /></Icon></BarButton>
      <BarButton $w={19} aria-label="Customize">
        <Icon v="0 0 39 39"><path d="M16 16l17 17" strokeWidth="7" strokeLinecap="round" /><path d="M5 8l6 6 5-5-6-6c7-2 13 3 12 9s-7 10-12 8S3 13 5 8z" fill={LIGHT} stroke="none" /></Icon>
      </BarButton>
      <CommandField>
        <Icon v="0 0 36 36"><rect x="2" y="3" width="32" height="29" rx="4" fill="#a0a0a0" stroke="#666666" /><path d="M8 11l8 7-8 7M19 25h9" stroke="#444444" /></Icon>
        <Caret size={4} color="#555555" />
        <input aria-label="Command" placeholder="Type a command" />
        <Icon v="0 0 24 24"><path d="M3 15l8-8 8 8z" fill="#222222" stroke="none" /></Icon>
      </CommandField>
    </CommandBar>
  </CommandArea>
);

const StatusDrop = ({ w }) => <StatusButton $w={w} aria-label="Options"><Caret size={6} /></StatusButton>;

const Status = () => (
  <StatusBar>
    <LayoutTabs>
      <LayoutTab $w={45} $active>Model</LayoutTab>
      <LayoutTab $w={50}>Layout1</LayoutTab>
      <LayoutTab $w={51}>Layout2</LayoutTab>
      <LayoutTab $w={20} aria-label="New layout"><Icon v="0 0 18 18"><path d="M9 0v18M0 9h18" /></Icon></LayoutTab>
    </LayoutTabs>
    <StatusTools>
      <StatusGroup><StatusButton $w={39} $big>MODEL</StatusButton></StatusGroup>
      <StatusGroup $pad={1}>
        <StatusButton $w={18} $active aria-label="Grid"><Icon v="154 84 39 45"><path d="M165 88v36M174 88v36M183 88v36M156 97h36M156 106h36M156 115h36" stroke="#ffffff" /></Icon></StatusButton>
        <StatusButton $w={22} aria-label="Snap"><Icon v="214 84 39 45"><path d="M219 94h32M219 106h32M219 118h32" strokeDasharray="4 8" strokeWidth="4" /></Icon></StatusButton>
        <StatusDrop w={11} />
      </StatusGroup>
      <StatusGroup>
        <StatusButton $w={20} aria-label="Ortho"><Icon v="311 84 45 45"><path d="M317 88v34h37" stroke="#f0f0f0" /><path d="M317 110h12v12" strokeWidth="2" /></Icon></StatusButton>
        <StatusButton $w={18} $active aria-label="Polar"><Icon v="368 84 45 45"><path d="M397 94a15 15 0 1 0 8 13M388 107l17-20M388 107h24" stroke="#ffffff" /></Icon></StatusButton>
        <StatusDrop w={14} />
        <StatusButton $w={16} aria-label="Isodraft"><Icon v="461 84 48 45"><path d="M468 92l32 28" /><path d="M486 86v38" stroke="#b89090" /><path d="M488 105l10-5" strokeWidth="2" stroke="#87b070" /></Icon></StatusButton>
        <StatusDrop w={16} />
        <StatusButton $w={18} $active aria-label="Tracking"><Icon v="558 84 45 45"><path d="M564 120l34-31M564 121h36" stroke="#ffffff" /><path d="M580 106v6" stroke="#ffffff" /></Icon></StatusButton>
        <StatusButton $w={20} aria-label="Object snap"><Icon v="615 84 45 45"><path d="M630 94h26v29h-31v-22" /><path d="M620 88h10v10h-10z" stroke="#e0a088" /></Icon></StatusButton>
        <StatusDrop w={12} />
      </StatusGroup>
      <StatusGroup>
        <StatusButton $w={18} aria-label="Lineweight"><Icon v="711 84 45 45"><path d="M715 92h16M715 101h38" /><path d="M715 110h16M715 119h24" strokeWidth="5" /><path d="M735 92h18M735 110h18" strokeWidth="2" /></Icon></StatusButton>
        <StatusButton $w={20} $active aria-label="Transparency"><Icon v="774 84 45 45"><path d="M779 88h34v34h-34z" stroke="#ffffff" /><path d="M784 95h26M789 102h22M784 109h26M789 116h22" strokeDasharray="5 5" strokeWidth="5" stroke="#ffffff" /></Icon></StatusButton>
      </StatusGroup>
      <StatusGroup>
        <StatusButton $w={22} aria-label="Annotation visibility"><Icon v="837 84 45 45"><path d="M859 87l15 36-13-8v9h-5v-9l-12 8z" fill="#f0f0f0" stroke="none" /></Icon></StatusButton>
        <StatusButton $w={16}>1:1</StatusButton>
        <StatusDrop w={9} />
      </StatusGroup>
      <StatusGroup>
        <StatusButton $w={21} aria-label="Workspace"><Icon v="980 84 45 45"><circle cx="1002" cy="106" r="10" strokeWidth="7" /><path d="M1002 88v9M1002 115v9M984 106h9M1011 106h9M989 93l7 7M1008 112l7 7M1015 93l-7 7M996 112l-7 7" strokeWidth="6" /></Icon></StatusButton>
        <StatusDrop w={12} />
      </StatusGroup>
      <StatusGroup><StatusButton $w={20} aria-label="Annotation monitor"><Icon v="1077 84 45 45"><path d="M1099 88v36M1081 106h36" strokeWidth="4" /></Icon></StatusButton></StatusGroup>
      <StatusGroup><StatusButton $w={20} aria-label="Isolate objects"><Icon v="1140 84 48 45"><path d="M1146 88h14v13h-14zM1161 110l8 13h-16z" /><circle cx="1175" cy="103" r="8" /></Icon></StatusButton></StatusGroup>
      <StatusGroup>
        <StatusButton $w={20} aria-label="Clean screen"><Icon v="1205 84 45 45"><path d="M1210 91h37v30h-37z" /><path d="M1241 97v9l-9-9zM1216 115v-9l9 9z" fill={LIGHT} stroke="none" /></Icon></StatusButton>
        <StatusButton $w={20} aria-label="Customization"><Icon v="1264 84 45 45"><path d="M1268 92h38M1268 106h38M1268 120h38" stroke="#f4f4f4" /></Icon></StatusButton>
      </StatusGroup>
    </StatusTools>
  </StatusBar>
);

const App = () => (
  <Page>
    <GlobalStyle />
    <TitleSection />
    <Ribbon />
    <Workspace>
      <Canvas>
        <ModelSpace />
        <ViewTools />
        <Command />
      </Canvas>
      <EdgeStrip />
    </Workspace>
    <Status />
  </Page>
);

export default App;
